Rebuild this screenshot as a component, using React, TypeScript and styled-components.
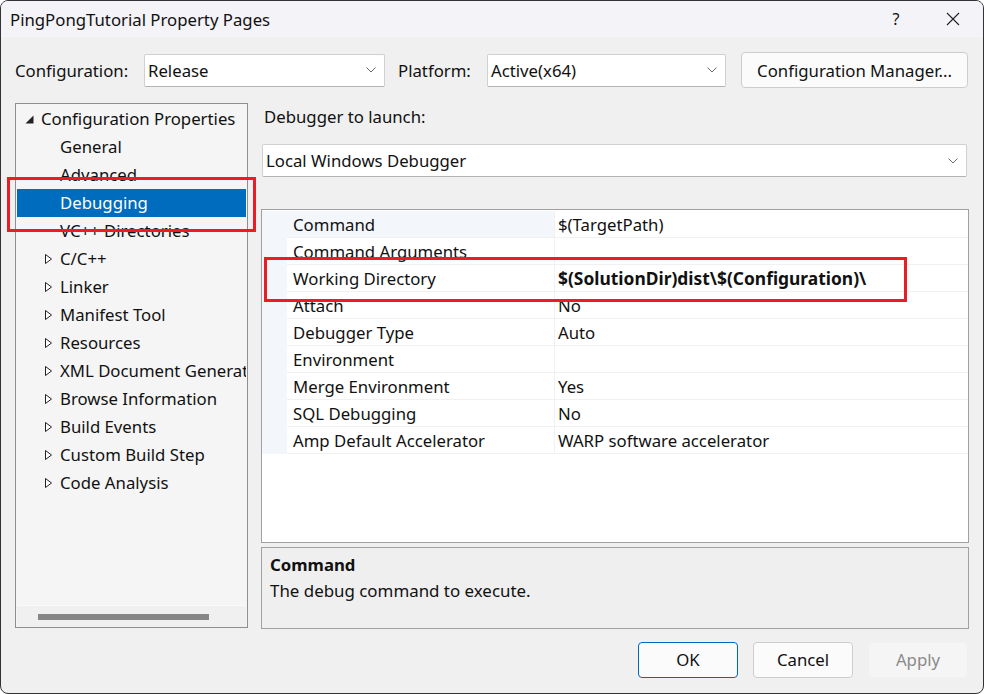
import React from "react";
import styled, { createGlobalStyle } from "styled-components";

const Global = createGlobalStyle`
  html, body { margin: 0; padding: 0; background: #fff; }
  #root { width: 984px; height: 694px; overflow: hidden; }
  * { box-sizing: border-box; }
`;

const Dialog = styled.div`
  position: relative;
  width: 984px;
  height: 694px;
  display: flex;
  flex-direction: column;
  background: #f0f0f0;
  border: 1px solid #333;
  border-radius: 8px;
  overflow: hidden;
  font-family: "Noto Sans", "Open Sans", sans-serif;
  font-size: 16.75px;
  color: #111;
`;

const TitleBar = styled.div`
  height: 36px;
  flex: none;
  display: flex;
  align-items: center;
  padding-left: 9px;
  background: #f3f3f8;
`;

const TitleText = styled.span`
  flex: 1;
`;

const HelpGlyph = styled.span`
  width: 20px;
  margin-right: 40px;
  text-align: center;
  font-size: 16px;
`;

const CloseGlyph = styled.svg`
  width: 14px;
  height: 14px;
  margin-right: 23px;
`;

const ConfigRow = styled.div`
  height: 36px;
  margin-top: 15px;
  flex: none;
  display: flex;
  align-items: center;
  padding-left: 14px;
`;

const FieldLabel = styled.span<{ $width: number; $inset?: number }>`
  width: ${(p) => p.$width}px;
  padding-left: ${(p) => p.$inset ?? 0}px;
  flex: none;
`;

const SelectBox = styled.div<{ $width: number }>`
  width: ${(p) => p.$width}px;
  height: 33px;
  flex: none;
  display: flex;
  align-items: center;
  justify-content: space-between;
  padding: 0 8px 0 3px;
  background: #fff;
  border: 1px solid #d0d0d0;
  border-bottom-color: #b4b4b4;
  border-radius: 2px;
`;

const Chevron = styled.svg`
  width: 10px;
  height: 6px;
  flex: none;
`;

const ActionButton = styled.div<{ $variant?: "primary" | "disabled"; $width: number }>`
  width: ${(p) => p.$width}px;
  height: 36px;
  flex: none;
  display: flex;
  align-items: center;
  justify-content: center;
  border-radius: 4px;
  background: ${(p) => (p.$variant === "disabled" ? "#f5f5f5" : "#fbfbfb")};
  color: ${(p) => (p.$variant === "disabled" ? "#8a8a8a" : "#111")};
  border: 1px solid
    ${(p) => (p.$variant === "primary" ? "#0067c0" : p.$variant === "disabled" ? "#f0f0f0" : "#cdcdcd")};
`;

const ManagerButton = styled(ActionButton)`
  margin-left: 15px;
`;

const FooterButton = styled(ActionButton)`
  padding-bottom: 2px;
`;

const Main = styled.div`
  flex: none;
  height: 526px;
  margin-top: 15px;
  padding-left: 14px;
  display: flex;
  gap: 13px;
`;

const Tree = styled.div`
  width: 233px;
  height: 525px;
  flex: none;
  display: flex;
  flex-direction: column;
  background: #f5f5f5;
  border: 1px solid #8f8f93;
`;

const TreeList = styled.div`
  flex: 1;
  min-height: 0;
  padding: 1px 1px 0;
  overflow: hidden;
`;

const TreeRow = styled.div<{ $selected?: boolean; $indent: number }>`
  height: 28px;
  display: flex;
  align-items: center;
  padding-left: ${(p) => p.$indent}px;
  padding-bottom: 1px;
  white-space: nowrap;
  overflow: hidden;
  background: ${(p) => (p.$selected ? "#006cbe" : "transparent")};
  color: ${(p) => (p.$selected ? "#fff" : "#111")};
`;

const Arrow = styled.svg`
  width: 9px;
  height: 12px;
  flex: none;
  margin-right: 7px;
`;

const TreeScroll = styled.div`
  height: 22px;
  flex: none;
  margin: 0 1px;
  padding: 8px 0 0 21px;
  background: #f0f0f0;
  border-top: 1px solid #fafafa;
`;

const ScrollThumb = styled.div`
  width: 171px;
  height: 6px;
  background: #868686;
`;

const RightPane = styled.div`
  width: 708px;
  flex: none;
  display: flex;
  flex-direction: column;
`;

const LaunchLabel = styled.div`
  height: 26px;
  padding-left: 3px;
  display: flex;
  align-items: center;
`;

const LaunchSelect = styled(SelectBox)`
  margin: 15px 0 0 1px;
`;

const Grid = styled.div`
  height: 334px;
  flex: none;
  margin-top: 32px;
  padding-top: 1px;
  background: #fff;
  border: 1px solid #a0a0a0;
  overflow: hidden;
`;

const GridRow = styled.div`
  height: 27px;
  display: flex;
  background: #f3f6fb;
`;

const NameCell = styled.div<{ $selected?: boolean }>`
  width: 267px;
  margin-left: 25px;
  flex: none;
  display: flex;
  align-items: center;
  padding-left: 6px;
  background: ${(p) => (p.$selected ? "#f3f6fb" : "#fff")};
  border-bottom: 1px solid #f1f1f1;
`;

const ValueCell = styled.div<{ $bold?: boolean }>`
  flex: 1;
  display: flex;
  align-items: center;
  padding-left: 3px;
  background: #fff;
  border-left: 1px solid #f1f1f1;
  border-bottom: 1px solid #f1f1f1;
  font-weight: ${(p) => (p.$bold ? 700 : 400)};
  font-size: ${(p) => (p.$bold ? "17.4px" : "inherit")};
`;

const Description = styled.div`
  height: 82px;
  flex: none;
  margin-top: 4px;
  padding: 3px 8px;
  background: #efefef;
  border: 1px solid #a0a0a0;
`;

const DescTitle = styled.div`
  height: 26px;
  font-weight: 700;
  display: flex;
  align-items: center;
`;

const DescBody = styled.div`
  height: 26px;
  display: flex;
  align-items: center;
  font-size: 16.9px;
`;

const Footer = styled.div`
  margin-top: 13px;
  padding-left: 637px;
  display: flex;
  gap: 15px;
`;

const Callout = styled.div<{ $x: number; $y: number; $w: number; $h: number }>`
  position: absolute;
  left: ${(p) => p.$x}px;
  top: ${(p) => p.$y}px;
  width: ${(p) => p.$w}px;
  height: ${(p) => p.$h}px;
  border: 3px solid #ed1c24;
  pointer-events: none;
`;

const ChevronIcon = () => (
  <Chevron viewBox="0 0 10 6">
    <path d="M0.5 0.5 L5 5 L9.5 0.5" fill="none" stroke="#666" strokeWidth="1" />
  </Chevron>
);

const treeItems: { label: string; arrow?: "open" | "closed"; selected?: boolean }[] = [
  { label: "Configuration Properties", arrow: "open" },
  { label: "General" },
  { label: "Advanced" },
  { label: "Debugging", selected: true },
  { label: "VC++ Directories" },
  { label: "C/C++", arrow: "closed" },
  { label: "Linker", arrow: "closed" },
  { label: "Manifest Tool", arrow: "closed" },
  { label: "Resources", arrow: "closed" },
  { label: "XML Document Generator", arrow: "closed" },
  { label: "Browse Information", arrow: "closed" },
  { label: "Build Events", arrow: "closed" },
  { label: "Custom Build Step", arrow: "closed" },
  { label: "Code Analysis", arrow: "closed" },
];

const rows: { name: string; value?: string; bold?: boolean }[] = [
  { name: "Command", value: "$(TargetPath)" },
  { name: "Command Arguments" },
  { name: "Working Directory", value: "$(SolutionDir)dist\\$(Configuration)\\", bold: true },
  { name: "Attach", value: "No" },
  { name: "Debugger Type", value: "Auto" },
  { name: "Environment" },
  { name: "Merge Environment", value: "Yes" },
  { name: "SQL Debugging", value: "No" },
  { name: "Amp Default Accelerator", value: "WARP software accelerator" },
];

const indentFor = (arrow?: "open" | "closed") => (arrow === "open" ? 8 : arrow === "closed" ? 27 : 43);

export default function App() {
  return (
    <>
      <Global />
      <Dialog>
        <TitleBar>
          <TitleText>PingPongTutorial Property Pages</TitleText>
          <HelpGlyph>?</HelpGlyph>
          <CloseGlyph viewBox="0 0 14 14">
            <path d="M1 1 L13 13 M13 1 L1 13" stroke="#222" strokeWidth="1.1" fill="none" />
          </CloseGlyph>
        </TitleBar>
        <ConfigRow>
          <FieldLabel $width={129}>Configuration:</FieldLabel>
          <SelectBox $width={241}>
            Release
            <ChevronIcon />
          </SelectBox>
          <FieldLabel $width={102} $inset={13}>Platform:</FieldLabel>
          <SelectBox $width={239}>
            Active(x64)
            <ChevronIcon />
          </SelectBox>
          <ManagerButton $width={227}>Configuration Manager...</ManagerButton>
        </ConfigRow>
        <Main>
          <Tree>
            <TreeList>
              {treeItems.map((t) => (
                <TreeRow key={t.label} $selected={t.selected} $indent={indentFor(t.arrow)}>
                  {t.arrow === "open" && (
                    <Arrow viewBox="0 0 9 12">
                      <path d="M8.5 2.5 V10.5 H0.5 Z" fill="#222" />
                    </Arrow>
                  )}
                  {t.arrow === "closed" && (
                    <Arrow viewBox="0 0 9 12">
                      <path d="M1.5 1.5 L7.5 6 L1.5 10.5 Z" fill="#fff" stroke="#222" strokeWidth="1" />
                    </Arrow>
                  )}
                  {t.label}
                </TreeRow>
              ))}
            </TreeList>
            <TreeScroll>
              <ScrollThumb />
            </TreeScroll>
          </Tree>
          <RightPane>
            <LaunchLabel>Debugger to launch:</LaunchLabel>
            <LaunchSelect $width={705}>
              Local Windows Debugger
              <ChevronIcon />
            </LaunchSelect>
            <Grid>
              {rows.map((r, i) => (
                <GridRow key={r.name}>
                  <NameCell $selected={i === 0}>{r.name}</NameCell>
                  <ValueCell $bold={r.bold}>{r.value}</ValueCell>
                </GridRow>
              ))}
            </Grid>
            <Description>
              <DescTitle>Command</DescTitle>
              <DescBody>The debug command to execute.</DescBody>
            </Description>
          </RightPane>
        </Main>
        <Footer>
          <FooterButton $variant="primary" $width={100}>OK</FooterButton>
          <FooterButton $width={100}>Cancel</FooterButton>
          <FooterButton $variant="disabled" $width={100}>Apply</FooterButton>
        </Footer>
        <Callout $x={6} $y={176} $w={249} $h={55} />
        <Callout $x={263} $y={256} $w={643} $h={45} />
      </Dialog>
    </>
  );
}
